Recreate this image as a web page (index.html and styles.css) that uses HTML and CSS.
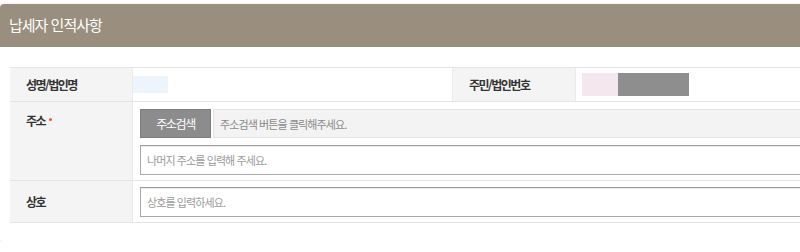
FILE: index.html
```html
<!DOCTYPE html>
<html lang="ko">
<head>
<meta charset="utf-8">
<title>납세자 인적사항</title>
<link rel="stylesheet" href="styles.css">
</head>
<body>
<section class="card">
  <header class="card-header">납세자 인적사항</header>
  <div class="card-body">
    <div class="form-table">
      <div class="row row-1">
        <div class="label">성명/법인명</div>
        <div class="value value-name"><span class="mask mask-blue"></span></div>
        <div class="label label-mid">주민/법인번호</div>
        <div class="value value-id"><span class="mask mask-pink"></span><span class="mask mask-gray"></span></div>
      </div>
      <div class="row row-2">
        <div class="label label-top">주소<span class="req"></span></div>
        <div class="value value-wide value-stack">
          <div class="addr-line">
            <button class="btn-search" type="button">주소검색</button>
            <input class="input input-readonly" type="text" placeholder="주소검색 버튼을 클릭해주세요." readonly>
          </div>
          <input class="input" type="text" placeholder="나머지 주소를 입력해 주세요.">
        </div>
      </div>
      <div class="row row-3">
        <div class="label">상호</div>
        <div class="value value-wide value-pad">
          <input class="input" type="text" placeholder="상호를 입력하세요.">
        </div>
      </div>
    </div>
  </div>
</section>
</body>
</html>
```
FILE: styles.css
```css
html, body {
  margin: 0;
  padding: 0;
  background: #fff;
  overflow: hidden;
}
body {
  font-family: "Noto Sans CJK KR", "Noto Sans", sans-serif;
  color: #333;
}
.card {
  margin-top: 4px;
  width: 840px;
  height: 238px;
  background: #fff;
  border-radius: 4px;
  box-shadow: 0 1px 4px rgba(0, 0, 0, 0.14);
  overflow: hidden;
}
.card-header {
  height: 43px;
  line-height: 42px;
  background: #9a8f7e;
  color: #fff;
  font-size: 15px;
  letter-spacing: -1px;
  padding-left: 9px;
}
.card-body {
  padding: 20px 0 0 10px;
}
.form-table {
  border-top: 1px solid #e4e4e4;
}
.row {
  display: grid;
  grid-template-columns: 123px 319px 124px 1fr;
  border-bottom: 1px solid #e4e4e4;
}
.row-1 { height: 33px; }
.row-2 { height: 78px; }
.row-3 { height: 41px; }
.label {
  background: #f4f4f4;
  font-size: 12px;
  font-weight: bold;
  letter-spacing: -1.5px;
  color: #333;
  padding-left: 16px;
  display: flex;
  align-items: center;
  border-right: 1px solid #ebebeb;
}
.label-mid {
  padding-left: 16px;
  border-left: 1px solid #ebebeb;
}
.label-top {
  align-items: flex-start;
  padding-top: 10px;
}
.req {
  display: inline-block;
  width: 3px;
  height: 3px;
  border-radius: 50%;
  background: #f05a28;
  margin-left: 4px;
  margin-top: 6px;
}
.value {
  display: flex;
  align-items: center;
}
.value-wide { grid-column: 2 / 5; }
.value-id { padding-left: 6px; }
.mask { display: block; height: 23px; }
.mask-blue { width: 35px; height: 17px; background: #edf4fb; margin-top: -1px; }
.mask-pink { width: 36px; background: #f4e8ee; }
.mask-gray { width: 71px; background: #8e8e8e; }
.value-stack {
  flex-direction: column;
  align-items: stretch;
  justify-content: flex-start;
  padding: 7px 0 0 7px;
  gap: 7px;
}
.value-pad {
  align-items: flex-start;
  padding: 6px 0 0 7px;
}
.addr-line {
  display: flex;
  gap: 2px;
  height: 29px;
}
.btn-search {
  width: 71px;
  height: 29px;
  margin: 0;
  background: #8c8c8c;
  border: 1px solid #7d7d7d;
  color: #fff;
  font-family: inherit;
  font-size: 12px;
  letter-spacing: -1.4px;
  padding: 0;
  cursor: pointer;
}
.input {
  display: block;
  box-sizing: border-box;
  width: 100%;
  height: 30px;
  margin: 0;
  padding: 0 6px;
  border: 1px solid #a9a9a9;
  border-top-color: #9a9a9a;
  box-shadow: inset 0 1px 1px rgba(0, 0, 0, 0.08);
  background: #fff;
  font-family: inherit;
  font-size: 11px;
  letter-spacing: -0.9px;
  color: #333;
  outline: none;
}
.input::placeholder { color: #9a9a9a; }
.input-readonly {
  flex: 1;
  height: 29px;
  background: #f3f3f3;
  border: 1px solid #e2e2e2;
  box-shadow: none;
}
.input-readonly::placeholder { color: #8a8a8a; }
```
